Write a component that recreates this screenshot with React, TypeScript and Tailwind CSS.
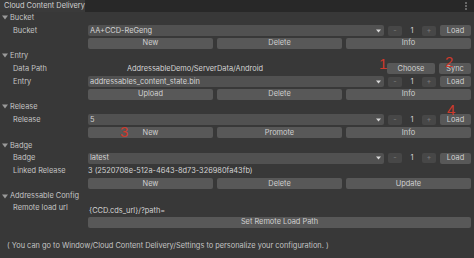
import React from 'react';

function Arrow() {
  return (
    <svg width="6" height="5" viewBox="0 0 6 5" className="mr-[2px] shrink-0">
      <path d="M0 0.5 L6 0.5 L3 4.5 Z" fill="#9a9a9a" />
    </svg>
  );
}

function Foldout({ label, h = 'h-[13px]' }: { label: string; h?: string }) {
  return (
    <div className={`flex items-center ${h} pl-[2px]`}>
      <Arrow />
      <span>{label}</span>
    </div>
  );
}

function Btn({ children, className = '' }: { children: React.ReactNode; className?: string }) {
  return (
    <div
      className={`h-[11px] flex items-center justify-center rounded-[2px] bg-[#585858] text-[#d0d0d0] ${className}`}
    >
      {children}
    </div>
  );
}

function Row({ label, h = 'h-[13px]', children }: { label?: string; h?: string; children?: React.ReactNode }) {
  return (
    <div className={`flex items-center ${h}`}>
      <div className="w-[88px] shrink-0 pl-[13px]">{label}</div>
      <div className="flex-1 flex items-center gap-[4px] min-w-0">{children}</div>
    </div>
  );
}

function PopupRow({ label, value, h }: { label: string; value: string; h?: string }) {
  return (
    <Row label={label} h={h}>
      <div className="flex-1 h-[11px] rounded-[2px] bg-[#515151] flex items-center pl-[2px] pr-[3px] text-[#d4d4d4]">
        <span className="flex-1">{value}</span>
        <svg width="5" height="4" viewBox="0 0 5 4">
          <path d="M0 0.5 L5 0.5 L2.5 3.5 Z" fill="#d8d8d8" />
        </svg>
      </div>
      <div className="w-[14px] h-[10px] rounded-[2px] bg-[#474747] text-[#7c7c7c] flex items-center justify-center">-</div>
      <div className="w-[12px] text-center text-[#d0d0d0]">1</div>
      <div className="w-[14px] h-[10px] rounded-[2px] bg-[#474747] text-[#7c7c7c] flex items-center justify-center">+</div>
      <Btn className="w-[31px]">Load</Btn>
    </Row>
  );
}

function ButtonRow({ items, h }: { items: string[]; h?: string }) {
  return (
    <Row h={h}>
      {items.map((t) => (
        <Btn key={t} className="flex-1">
          {t}
        </Btn>
      ))}
    </Row>
  );
}

export default function App() {
  return (
    <div className="relative w-[474px] h-[258px] overflow-hidden bg-[#383838] text-[#c4c4c4] font-['Inter',sans-serif] text-[7.4px] leading-none whitespace-nowrap">
      <div className="flex h-[12px] bg-[#282828]">
        <div className="w-[85px] bg-[#3a3a3a] flex items-center pl-[4px] text-[#d0d0d0]">Cloud Content Delivery</div>
        <div className="flex-1" />
        <svg width="2" height="8" viewBox="0 0 2 8" className="mr-[7px] mt-[2px]">
          <circle cx="1" cy="1" r="0.8" fill="#bbbbbb" />
          <circle cx="1" cy="4" r="0.8" fill="#bbbbbb" />
          <circle cx="1" cy="7" r="0.8" fill="#bbbbbb" />
        </svg>
      </div>

      <div className="flex flex-col pr-[3px] -mt-[1px]">
        <Foldout label="Bucket" />
        <PopupRow label="Bucket" value="AA+CCD-ReGeng" />
        <ButtonRow items={['New', 'Delete', 'Info']} h="h-[12px]" />

        <Foldout label="Entry" />
        <Row label="Data Path">
          <span className="w-[175px] text-right text-[#d4d4d4]">AddressableDemo/ServerData/Android</span>
          <div className="flex-1" />
          <Btn className="w-[48px]">Choose</Btn>
          <Btn className="w-[32px]">Sync</Btn>
        </Row>
        <PopupRow label="Entry" value="addressables_content_state.bin" />
        <ButtonRow items={['Upload', 'Delete', 'Info']} h="h-[12px]" />

        <Foldout label="Release" />
        <PopupRow label="Release" value="5" />
        <ButtonRow items={['New', 'Promote', 'Info']} />

        <Foldout label="Badge" />
        <PopupRow label="Badge" value="latest" h="h-[12px]" />
        <Row label="Linked Release">
          <span className="text-[#d4d4d4]">3 (2520708e-512a-4643-8d73-326980fa43fb)</span>
        </Row>
        <ButtonRow items={['New', 'Delete', 'Update']} />

        <Foldout label="Addressable Config" h="h-[12px]" />
        <div className="flex h-[14px]">
          <div className="w-[88px] shrink-0 pl-[13px] pt-[2px]">Remote load url</div>
          <div className="flex-1 pt-[5px] pl-[1px] text-[#d4d4d4]">{'{CCD.cds_url}/?path='}</div>
        </div>
        <Row h="h-[12px]">
          <Btn className="flex-1">Set Remote Load Path</Btn>
        </Row>

        <div className="h-[12px] mt-[12px] flex items-center pl-[7px]">
          ( You can go to Window/Cloud Content Delivery/Settings to personalize your configuration. )
        </div>
      </div>

      <span className="absolute left-[379px] top-[56px] text-[15px] leading-none text-[#cf3a2c] font-['Liberation_Sans',sans-serif]">1</span>
      <span className="absolute left-[445px] top-[54px] text-[15px] leading-none text-[#cf3a2c] font-['Liberation_Sans',sans-serif]">2</span>
      <span className="absolute left-[120px] top-[124px] text-[15px] leading-none text-[#cf3a2c] font-['Liberation_Sans',sans-serif]">3</span>
      <span className="absolute left-[447px] top-[102px] text-[15px] leading-none text-[#cf3a2c] font-['Liberation_Sans',sans-serif]">4</span>
    </div>
  );
}
